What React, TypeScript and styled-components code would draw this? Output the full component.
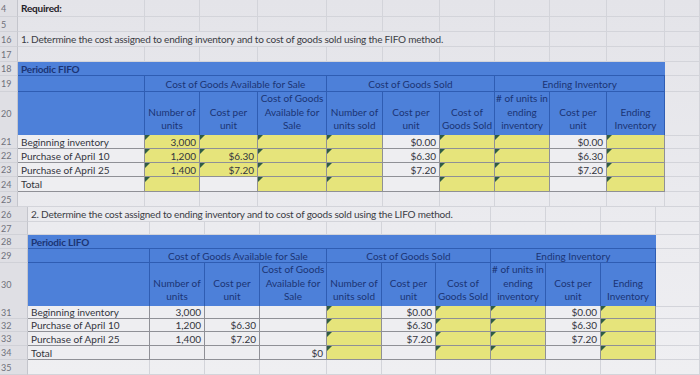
import React from "react";
import styled, { createGlobalStyle, css } from "styled-components";

const GlobalStyle = createGlobalStyle`
  html, body {
    margin: 0;
    padding: 0;
  }
  body {
    background: #e8e8ec;
    font-family: Lato, "Open Sans", sans-serif;
    color: #33353d;
    overflow: hidden;
  }
`;

type Tone = "sheet" | "blue" | "yellow" | "white";
type Align = "left" | "center" | "right";

const Sheet = styled.div`
  width: 700px;
  height: 375px;
  overflow: hidden;
  display: flex;
  flex-direction: column;
  background: linear-gradient(180deg, #e4e4e9 0%, #ebebef 60%, #efeff2 100%);
`;

const Section = styled.div<{ $cols: string }>`
  --cols: ${(p) => p.$cols};
  display: flex;
  flex-direction: column;
`;

const Row = styled.div<{ $h: number }>`
  display: grid;
  grid-template-columns: var(--cols);
  height: ${(p) => p.$h}px;
`;

const RowNum = styled.div`
  display: flex;
  align-items: center;
  padding-left: 1px;
  font-size: 9px;
  color: #6f717a;
  background: #dfdfe4;
  border-right: 1px solid #c4c5cc;
  border-bottom: 1px solid #d0d1d7;
  overflow: hidden;
  white-space: nowrap;
`;

const toneStyles: Record<Tone, ReturnType<typeof css>> = {
  sheet: css`
    background: transparent;
    border-right: 1px solid #d3d4da;
    border-bottom: 1px solid #d3d4da;
  `,
  blue: css`
    background: #4d80d9;
    color: #1b3474;
  `,
  yellow: css`
    background: #e6e47b;
    border-right: 1px solid #8f9096;
    border-bottom: 1px solid #8f9096;
  `,
  white: css`
    background: #eeeef1;
    border-right: 1px solid #8f9096;
    border-bottom: 1px solid #8f9096;
  `,
};

const Cell = styled.div<{
  $tone?: Tone;
  $span?: number;
  $align?: Align;
  $lines?: boolean;
  $bottomLine?: boolean;
}>`
  position: relative;
  box-sizing: border-box;
  display: flex;
  align-items: center;
  justify-content: ${(p) =>
    p.$align === "right" ? "flex-end" : p.$align === "center" ? "center" : "flex-start"};
  grid-column: span ${(p) => p.$span ?? 1};
  padding: 0 3px;
  font-size: 10px;
  white-space: nowrap;
  overflow: visible;
  ${(p) => toneStyles[p.$tone ?? "sheet"]}
  ${(p) =>
    p.$tone === "blue" &&
    css`
      border-right: ${p.$lines ? "1px solid #2f5db3" : "none"};
      border-bottom: ${p.$bottomLine ? "1px solid #2f5db3" : "none"};
    `}
  ${(p) =>
    p.$tone === "yellow" &&
    css`
      &::before {
        content: "";
        position: absolute;
        left: 0;
        top: 0;
        border-top: 5px solid #2f5c45;
        border-right: 5px solid transparent;
      }
    `}
`;

const HeadCell = styled(Cell)`
  flex-direction: column;
  justify-content: flex-end;
  align-items: center;
  padding-bottom: 2px;
  text-align: center;
  line-height: 13.5px;
`;

const Title = styled.span`
  font-weight: 700;
  letter-spacing: -0.2px;
`;

const Note = styled.span<{ $bold?: boolean }>`
  font-size: 10px;
  letter-spacing: -0.2px;
  font-weight: ${(p) => (p.$bold ? 700 : 400)};
  color: ${(p) => (p.$bold ? "#1f2128" : "#3a3c44")};
`;

type Spec = { tone: Tone; v?: string };
const y = (v = ""): Spec => ({ tone: "yellow", v });
const w = (v = ""): Spec => ({ tone: "white", v });

type DataRow = { n: number; h: number; label: string; cells: Spec[] };

const headers = [
  ["Number of", "units"],
  ["Cost per", "unit"],
  ["Cost of Goods", "Available for", "Sale"],
  ["Number of", "units sold"],
  ["Cost per", "unit"],
  ["Cost of", "Goods Sold"],
  ["# of units in", "ending", "inventory"],
  ["Cost per", "unit"],
  ["Ending", "Inventory"],
];

const fifoRows: DataRow[] = [
  { n: 21, h: 14, label: "Beginning inventory", cells: [y("3,000"), y(), y(), y(), w("$0.00"), y(), y(), w("$0.00"), y()] },
  { n: 22, h: 14, label: "Purchase of April 10", cells: [y("1,200"), y("$6.30"), y(), y(), w("$6.30"), y(), y(), w("$6.30"), y()] },
  { n: 23, h: 14, label: "Purchase of April 25", cells: [y("1,400"), y("$7.20"), y(), y(), w("$7.20"), y(), y(), w("$7.20"), y()] },
  { n: 24, h: 15, label: "Total", cells: [y(), w(), y(), y(), w(), y(), y(), w(), y()] },
];

const lifoRows: DataRow[] = [
  { n: 31, h: 13, label: "Beginning inventory", cells: [w("3,000"), w(), w(), y(), w("$0.00"), y(), y(), w("$0.00"), y()] },
  { n: 32, h: 13, label: "Purchase of April 10", cells: [w("1,200"), w("$6.30"), w(), y(), w("$6.30"), y(), y(), w("$6.30"), y()] },
  { n: 33, h: 14, label: "Purchase of April 25", cells: [w("1,400"), w("$7.20"), w(), y(), w("$7.20"), y(), y(), w("$7.20"), y()] },
  { n: 34, h: 14, label: "Total", cells: [w(), w(), w("$0"), y(), w(), y(), y(), w(), y()] },
];

// a text cell swallows the gridlines of the columns its text runs over
const EmptyRow: React.FC<{ n: number; h: number; text?: string; bold?: boolean; span?: number }> = ({
  n,
  h,
  text,
  bold,
  span = 1,
}) => (
  <Row $h={h}>
    <RowNum>{n}</RowNum>
    <Cell $span={span}>{text && <Note $bold={bold}>{text}</Note>}</Cell>
    {Array.from({ length: 11 - span }, (_, i) => (
      <Cell key={i} />
    ))}
  </Row>
);

const InventoryTable: React.FC<{
  start: number;
  title: string;
  heights: [number, number, number];
  rows: DataRow[];
}> = ({ start, title, heights, rows }) => (
  <>
    <Row $h={heights[0]}>
      <RowNum>{start}</RowNum>
      <Cell $tone="blue" $span={10} $bottomLine>
        <Title>{title}</Title>
      </Cell>
      <Cell />
    </Row>
    <Row $h={heights[1]}>
      <RowNum>{start + 1}</RowNum>
      <Cell $tone="blue" $lines $bottomLine />
      <Cell $tone="blue" $span={3} $align="center" $lines $bottomLine>
        Cost of Goods Available for Sale
      </Cell>
      <Cell $tone="blue" $span={3} $align="center" $lines $bottomLine>
        Cost of Goods Sold
      </Cell>
      <Cell $tone="blue" $span={3} $align="center" $lines $bottomLine>
        Ending Inventory
      </Cell>
      <Cell />
    </Row>
    <Row $h={heights[2]}>
      <RowNum>{start + 2}</RowNum>
      <HeadCell $tone="blue" $lines $bottomLine />
      {headers.map((lines, i) => (
        <HeadCell key={i} $tone="blue" $lines $bottomLine>
          {lines.map((l) => (
            <span key={l}>{l}</span>
          ))}
        </HeadCell>
      ))}
      <Cell />
    </Row>
    {rows.map((r) => (
      <Row key={r.n} $h={r.h}>
        <RowNum>{r.n}</RowNum>
        <Cell $tone="white">{r.label}</Cell>
        {r.cells.map((c, i) => (
          <Cell key={i} $tone={c.tone} $align="right">
            {c.v}
          </Cell>
        ))}
        <Cell />
      </Row>
    ))}
  </>
);

const App: React.FC = () => (
  <Sheet>
    <GlobalStyle />
    <Section $cols="18px 127px 55px 58px 69px 56px 57px 55px 55px 57px 58px 1fr">
      <EmptyRow n={4} h={17} text="Required:" bold />
      <EmptyRow n={5} h={15} />
      <EmptyRow
        n={16}
        h={15}
        span={7}
        text="1. Determine the cost assigned to ending inventory and to cost of goods sold using the FIFO method."
      />
      <EmptyRow n={17} h={15} />
      <InventoryTable start={18} title="Periodic FIFO" heights={[14, 16, 43]} rows={fifoRows} />
      <EmptyRow n={25} h={15} />
    </Section>
    <Section $cols="28px 122px 55px 55px 67px 55px 54px 55px 55px 55px 55px 1fr">
      <EmptyRow
        n={26}
        h={15}
        span={7}
        text="2. Determine the cost assigned to ending inventory and to cost of goods sold using the LIFO method."
      />
      <EmptyRow n={27} h={13} />
      <InventoryTable start={28} title="Periodic LIFO" heights={[14, 14, 43]} rows={lifoRows} />
      <EmptyRow n={35} h={15} />
    </Section>
  </Sheet>
);

export default App;
